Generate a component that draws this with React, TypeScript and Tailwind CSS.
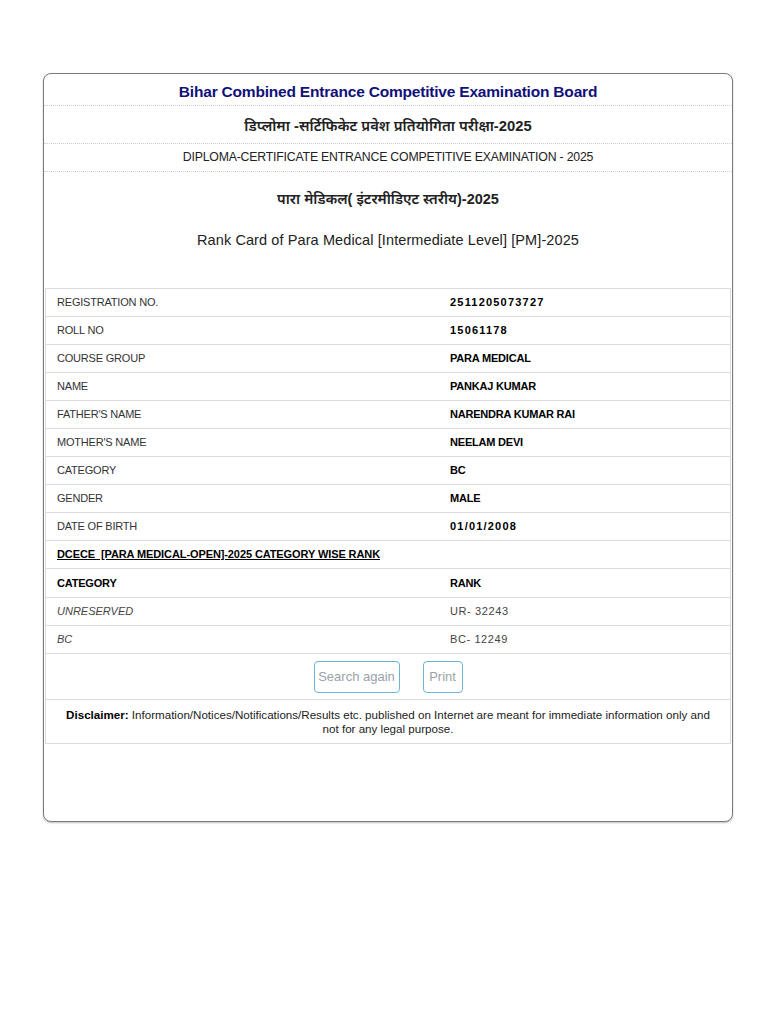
import React from 'react';

const FONT = { fontFamily: '"Liberation Sans Narrow", "Liberation Sans", "Noto Sans", sans-serif' };

const DETAILS: [string, string, boolean][] = [
  ['REGISTRATION NO.', '2511205073727', true],
  ['ROLL NO', '15061178', true],
  ['COURSE GROUP', 'PARA MEDICAL', false],
  ['NAME', 'PANKAJ KUMAR', false],
  ["FATHER'S NAME", 'NARENDRA KUMAR RAI', false],
  ["MOTHER'S NAME", 'NEELAM DEVI', false],
  ['CATEGORY', 'BC', false],
  ['GENDER', 'MALE', false],
  ['DATE OF BIRTH', '01/01/2008', true],
];

const RANKS: [string, string][] = [
  ['UNRESERVED', 'UR- 32243'],
  ['BC', 'BC- 12249'],
];

function Row({ children, className = '' }: { children: React.ReactNode; className?: string }) {
  return (
    <div className={`grid grid-cols-[393px_1fr] h-[28px] items-center border-t border-[#dcdcdc] ${className}`}>
      {children}
    </div>
  );
}

export default function App() {
  return (
    <div className="bg-white min-h-[1024px] pt-[73px]" style={FONT}>
      <div className="ml-[43px] w-[690px] h-[749px] border border-[#7a7a7a] rounded-[8px] shadow-[0_1px_2px_rgba(0,0,0,0.25)] bg-white overflow-hidden">
        <div className="h-[32px] flex items-end justify-center pb-[2px] border-b border-dotted border-[#cfcfcf]">
          <h1 className="text-[15.5px] font-bold text-[#10107a] tracking-[-0.2px]">
            Bihar Combined Entrance Competitive Examination Board
          </h1>
        </div>
        <div className="h-[38px] flex items-center justify-center pt-[4px] border-b border-dotted border-[#cfcfcf]">
          <p className="text-[14.8px] font-semibold text-[#222]">डिप्लोमा -सर्टिफिकेट प्रवेश प्रतियोगिता परीक्षा-2025</p>
        </div>
        <div className="h-[28px] flex items-center justify-center border-b border-dotted border-[#cfcfcf]">
          <p className="text-[12.3px] text-[#222] tracking-[-0.2px]">DIPLOMA-CERTIFICATE ENTRANCE COMPETITIVE EXAMINATION - 2025</p>
        </div>
        <div className="flex flex-col items-center pt-[17px] h-[116px]">
          <p className="text-[14.5px] font-semibold text-[#222]">पारा मेडिकल( इंटरमीडिएट स्तरीय)-2025</p>
          <p className="mt-[19px] text-[14.5px] text-[#222] tracking-[0.1px]">
            Rank Card of Para Medical [Intermediate Level] [PM]-2025
          </p>
        </div>

        <div className="mx-px border-x border-b border-[#dcdcdc] text-[11px] text-[#222]">
          {DETAILS.map(([label, value, numeric]) => (
            <Row key={label}>
              <span className="pl-[11px] text-[#333] tracking-[-0.2px]">{label}</span>
              <span
                className={`pl-[11px] font-bold text-black ${numeric ? 'tracking-[1.2px]' : 'tracking-[-0.2px]'}`}
              >
                {value}
              </span>
            </Row>
          ))}
          <Row>
            <span className="pl-[11px] font-bold underline text-black whitespace-nowrap tracking-[-0.1px]">
              DCECE &nbsp;[PARA MEDICAL-OPEN]-2025 CATEGORY WISE RANK
            </span>
            <span />
          </Row>
          <Row className="h-[29px]">
            <span className="pl-[11px] font-bold text-black tracking-[-0.2px]">CATEGORY</span>
            <span className="pl-[11px] font-bold text-black tracking-[-0.2px]">RANK</span>
          </Row>
          {RANKS.map(([label, value]) => (
            <Row key={label}>
              <span className="pl-[11px] italic text-[#444]">{label}</span>
              <span className="pl-[11px] text-[#444] tracking-[0.6px]">{value}</span>
            </Row>
          ))}
          <div className="h-[46px] flex items-center justify-center gap-[23px] border-t border-[#dcdcdc]">
            <button className="h-[32px] w-[86px] whitespace-nowrap rounded-[4px] border border-[#6db3d6] text-[#9aa3a8] text-[13px] bg-white">
              Search again
            </button>
            <button className="h-[32px] w-[40px] rounded-[4px] border border-[#6db3d6] text-[#9aa3a8] text-[13px] bg-white">
              Print
            </button>
          </div>
          <div className="h-[44px] flex items-center justify-center border-t border-[#dcdcdc] px-[12px]">
            <p className="text-center text-[11.6px] leading-[14px] text-[#222]">
              <span className="font-bold text-black">Disclaimer:</span> Information/Notices/Notifications/Results etc. published on Internet are meant for immediate information only and not for any legal purpose.
            </p>
          </div>
        </div>
      </div>
    </div>
  );
}
